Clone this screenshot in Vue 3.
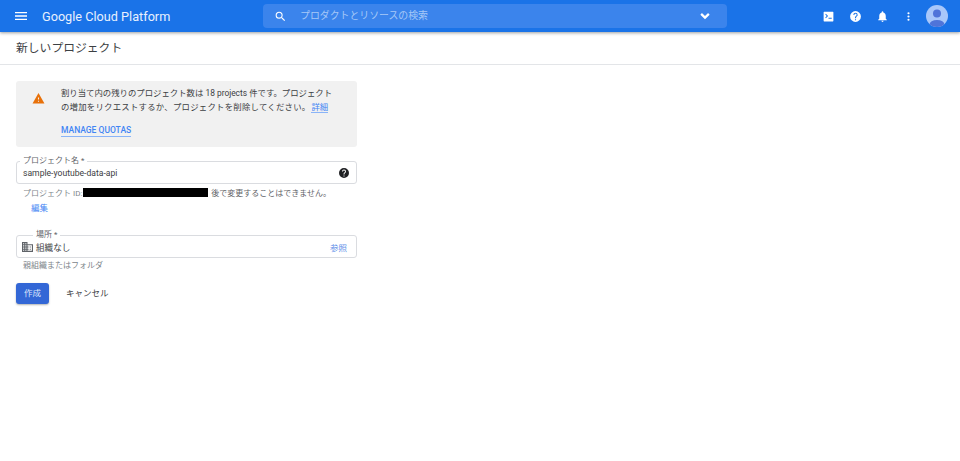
<template>
  <div class="page">
    <!-- ヘッダー -->
    <header class="topbar">
      <svg class="menu-icon" viewBox="0 0 24 24"><path d="M3 18h18v-2H3v2zm0-5h18v-2H3v2zm0-7v2h18V6H3z" /></svg>
      <span class="brand">Google Cloud Platform</span>
      <div class="search">
        <svg class="search-icon" viewBox="0 0 24 24"><path d="M15.5 14h-.79l-.28-.27A6.47 6.47 0 0 0 16 9.5 6.5 6.5 0 1 0 9.5 16c1.61 0 3.09-.59 4.23-1.57l.27.28v.79l5 4.99L20.49 19l-4.99-5zm-6 0C7.01 14 5 11.99 5 9.5S7.01 5 9.5 5 14 7.01 14 9.5 11.99 14 9.5 14z" /></svg>
        <span class="search-text">プロダクトとリソースの検索</span>
        <svg class="chevron" viewBox="0 0 24 24"><path d="M7.41 7.59 12 12.17l4.59-4.58L19 10l-7 7-7-7z" /></svg>
      </div>
      <div class="top-actions">
        <svg class="top-icon" viewBox="0 0 24 24"><path fill-rule="evenodd" d="M4 3h16a1 1 0 0 1 1 1v16a1 1 0 0 1-1 1H4a1 1 0 0 1-1-1V4a1 1 0 0 1 1-1zm2 5.200L8.800 11 6 13.800 7.200 15l4-4-4-4L6 8.200zM12 14.500V16h6v-1.500h-6z" /></svg>
        <svg class="top-icon" viewBox="0 0 24 24"><path d="M12 2a10 10 0 1 0 0 20 10 10 0 0 0 0-20zm1 17h-2v-2h2v2zm2.070-7.750-.9.920C13.450 12.900 13 13.500 13 15h-2v-.5c0-1.100.45-2.100 1.170-2.830l1.240-1.260A2 2 0 1 0 10 9H8a4 4 0 1 1 8 0c0 .88-.36 1.680-.93 2.250z" /></svg>
        <svg class="top-icon" viewBox="0 0 24 24"><path d="M12 22a2 2 0 0 0 2-2h-4a2 2 0 0 0 2 2zm6-6v-5c0-3.070-1.630-5.640-4.500-6.320V4a1.500 1.500 0 0 0-3 0v.68C7.640 5.360 6 7.920 6 11v5l-2 2v1h16v-1l-2-2z" /></svg>
        <svg class="top-icon" viewBox="0 0 24 24"><path d="M12 8a2 2 0 1 0 0-4 2 2 0 0 0 0 4zm0 2a2 2 0 1 0 0 4 2 2 0 0 0 0-4zm0 6a2 2 0 1 0 0 4 2 2 0 0 0 0-4z" /></svg>
        <svg class="avatar" viewBox="0 0 22 22">
          <defs><clipPath id="av"><circle cx="11" cy="11" r="11" /></clipPath></defs>
          <circle cx="11" cy="11" r="11" fill="#a8c7fa" />
          <g clip-path="url(#av)" fill="#4f74d9">
            <circle cx="11" cy="8.500" r="4" />
            <ellipse cx="11" cy="19.500" rx="7.500" ry="4.500" />
          </g>
        </svg>
      </div>
    </header>

    <!-- タイトル -->
    <div class="title-bar"><span class="title-text">新しいプロジェクト</span></div>

    <main class="form">
      <!-- 割り当ての警告 -->
      <section class="notice">
        <svg class="warn-icon" viewBox="0 0 24 24"><path fill="#e8710a" d="M1 21h22L12 2 1 21zm12-3h-2v-2h2v2zm0-4h-2v-4h2v4z" /></svg>
        <div class="notice-body">
          <p class="notice-text">割り当て内の残りのプロジェクト数は 18 projects 件です。プロジェクト<br /><span class="second-line">の増加をリクエストするか、プロジェクトを削除してください。</span><a class="link detail">詳細</a></p>
          <a class="link quota">MANAGE QUOTAS</a>
        </div>
      </section>

      <!-- プロジェクト名 -->
      <div class="field name-field">
        <span class="float-label">プロジェクト名 *</span>
        <span class="value">sample-youtube-data-api</span>
        <svg class="help-icon" viewBox="0 0 24 24"><path d="M12 2a10 10 0 1 0 0 20 10 10 0 0 0 0-20zm1 17h-2v-2h2v2zm2.070-7.750-.9.920C13.450 12.900 13 13.500 13 15h-2v-.5c0-1.100.45-2.100 1.170-2.830l1.240-1.260A2 2 0 1 0 10 9H8a4 4 0 1 1 8 0c0 .88-.36 1.680-.93 2.250z" /></svg>
      </div>
      <div class="hint id-row">
        <span>プロジェクト ID:</span>
        <span class="redacted"></span>
        <span class="hint-dark">後で変更することはできません。</span>
      </div>
      <a class="edit">編集</a>

      <!-- 場所 -->
      <div class="field place-field">
        <span class="float-label place-label">場所 *</span>
        <svg class="org-icon" viewBox="2 3 20 18"><path d="M12 7V3H2v18h20V7H12zM6 19H4v-2h2v2zm0-4H4v-2h2v2zm0-4H4V9h2v2zm0-4H4V5h2v2zm4 12H8v-2h2v2zm0-4H8v-2h2v2zm0-4H8V9h2v2zm0-4H8V5h2v2zm10 12h-8v-2h2v-2h-2v-2h2v-2h-2V9h8v10zm-2-8h-2v2h2v-2zm0 4h-2v2h2v-2z" /></svg>
        <span class="value place-value">組織なし</span>
        <a class="browse">参照</a>
      </div>
      <div class="hint place-hint">親組織またはフォルダ</div>

      <div class="actions">
        <button type="button" class="btn-create">作成</button>
        <button type="button" class="btn-cancel">キャンセル</button>
      </div>
    </main>
  </div>
</template>

<script setup>
</script>

<style>
html,
body {
  margin: 0;
  background: #fff;
}
</style>

<style scoped>
.page {
  width: 960px;
  height: 461px;
  overflow: hidden;
  background: #fff;
  font-family: Roboto, "Noto Sans CJK JP", sans-serif;
  color: #3c4043;
}

/* ===== ヘッダー ===== */
.topbar {
  position: relative;
  z-index: 2;
  height: 32px;
  display: flex;
  align-items: center;
  background: #1a73e8;
  box-shadow: 0 1px 3px rgba(60, 64, 67, 0.5);
}

.menu-icon {
  width: 16px;
  height: 16px;
  margin-left: 13px;
  fill: #fff;
}

.brand {
  margin-left: 13px;
  width: 221px;
  font-size: 12.700px;
  color: #e8f0fe;
  white-space: nowrap;
}

.search {
  width: 464px;
  height: 24px;
  display: flex;
  align-items: center;
  border-radius: 4px;
  background: #3b84ec;
}

.search-icon {
  width: 13px;
  height: 13px;
  margin-left: 11px;
  fill: #fff;
}

.search-text {
  margin: 0 0 3px 13px;
  font-size: 9.900px;
  color: #a6c8f7;
}

.chevron {
  width: 16px;
  height: 16px;
  margin-left: auto;
  margin-right: 14px;
  fill: #fff;
}

.top-actions {
  display: flex;
  align-items: center;
  margin-left: 95px;
}

.top-icon {
  width: 13px;
  height: 13px;
  margin-right: 13.800px;
  fill: #fff;
}

.avatar {
  width: 22px;
  height: 22px;
  margin-left: -3px;
}

/* ===== タイトル ===== */
.title-bar {
  height: 32px;
  display: flex;
  align-items: center;
  padding-left: 16px;
  border-bottom: 1px solid #e3e5e8;
}

.title-text {
  margin-bottom: 3px;
  font-size: 11.800px;
  color: #3c4043;
}

/* ===== フォーム ===== */
.form {
  width: 341px;
  margin-left: 16px;
  padding-top: 16px;
}

.notice {
  height: 66px;
  display: flex;
  border-radius: 3px;
  background: #f1f1f1;
}

.warn-icon {
  width: 13px;
  height: 13px;
  margin: 11px 0 0 16px;
}

.notice-body {
  margin-left: 16px;
  width: 290px;
  padding-top: 5px;
}

.notice-text {
  margin: 0;
  font-size: 8.400px;
  line-height: 14px;
  white-space: nowrap;
  color: #3c4043;
}

.second-line {
  letter-spacing: 0.25px;
}

.link {
  color: #4285f4;
  border-bottom: 1px solid #8ab4f8;
}

.detail {
  margin-left: 1px;
}

.quota {
  display: inline-block;
  margin-top: 11px;
  font-size: 8.500px;
  font-weight: 500;
  line-height: 11px;
}

.field {
  position: relative;
  height: 23px;
  display: flex;
  align-items: center;
  box-sizing: border-box;
  border: 1px solid #dadce0;
  border-radius: 3px;
  padding: 0 6px;
}

.name-field {
  margin-top: 14px;
}

.float-label {
  position: absolute;
  top: -6px;
  left: 3px;
  padding: 0 3px;
  background: #fff;
  font-size: 8px;
  line-height: 10px;
  color: #5f6368;
}

.place-label {
  left: 16px;
}

.value {
  font-size: 8.600px;
  color: #3c4043;
}

.help-icon {
  width: 12px;
  height: 12px;
  margin-left: auto;
  fill: #202124;
}

.hint {
  font-size: 8px;
  color: #80868b;
}

.id-row {
  display: flex;
  align-items: center;
  height: 12px;
  margin-top: 2px;
  padding-left: 7px;
}

.redacted {
  width: 125px;
  height: 9px;
  margin: 0 3px 0 1px;
  background: #000;
}

.hint-dark {
  color: #5f6368;
}

.edit {
  display: block;
  margin: 4px 0 0 15px;
  font-size: 8.500px;
  line-height: 12px;
  color: #4285f4;
}

.place-field {
  margin-top: 21px;
}

.org-icon {
  width: 11px;
  height: 10px;
  margin-right: 3px;
  margin-left: -1px;
  fill: #5f6368;
}

.browse {
  margin-left: auto;
  margin-right: 3px;
  font-size: 8.500px;
  color: #5f8fe8;
}

.place-hint {
  margin-top: 2px;
  padding-left: 7px;
  line-height: 12px;
}

.actions {
  display: flex;
  align-items: center;
  margin-top: 11px;
}

.btn-create {
  width: 33px;
  height: 21px;
  padding: 0 0 3px;
  border: 0;
  border-radius: 3px;
  background: #3367d6;
  color: #dbe6fb;
  font-family: inherit;
  font-size: 8.500px;
  box-shadow: 0 1px 2px rgba(60, 64, 67, 0.4);
}

.btn-cancel {
  margin-left: 17px;
  padding: 0 0 3px;
  border: 0;
  background: transparent;
  color: #3c4043;
  font-family: inherit;
  font-size: 8.500px;
}
</style>
